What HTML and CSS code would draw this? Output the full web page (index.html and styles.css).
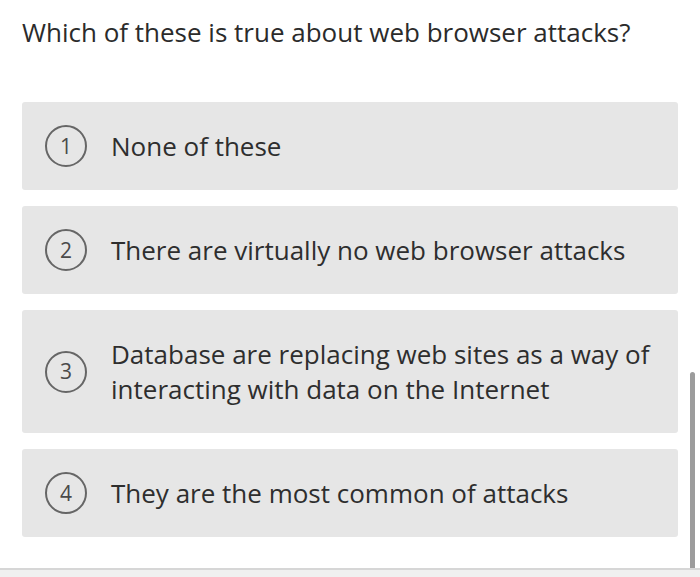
FILE: index.html
```html
<!DOCTYPE html>
<html lang="en">
<head>
<meta charset="utf-8">
<title>Question</title>
<link rel="stylesheet" href="styles.css">
</head>
<body>
<main class="page">
  <h1 class="question">Which of these is true about web browser attacks?</h1>
  <ol class="options">
    <li class="option"><span class="num">1</span><span class="label">None of these</span></li>
    <li class="option"><span class="num">2</span><span class="label">There are virtually no web browser attacks</span></li>
    <li class="option"><span class="num">3</span><span class="label">Database are replacing web sites as a way of interacting with data on the Internet</span></li>
    <li class="option"><span class="num">4</span><span class="label">They are the most common of attacks</span></li>
  </ol>
</main>
<div class="scrollbar"></div>
<div class="bottom-bar"></div>
</body>
</html>
```
FILE: styles.css
```css
html, body {
  margin: 0;
  padding: 0;
  background: #ffffff;
  height: 577px;
  overflow: hidden;
}
body {
  font-family: "Open Sans", "Noto Sans", sans-serif;
  color: #333333;
  position: relative;
}
.page {
  padding: 12px 22px 0 22px;
}
.question {
  margin: 0;
  font-size: 26px;
  font-weight: 400;
  line-height: 40px;
  color: #2b2b2b;
}
.options {
  list-style: none;
  margin: 50px 0 0 0;
  padding: 0;
  display: flex;
  flex-direction: column;
  gap: 16px;
}
.option {
  background: #e6e6e6;
  border-radius: 3px;
  display: flex;
  align-items: center;
  gap: 24px;
  padding: 21.5px 20px 21.5px 23px;
}
.num {
  flex: 0 0 auto;
  width: 38px;
  height: 38px;
  border: 2px solid #666666;
  border-radius: 50%;
  display: flex;
  align-items: center;
  justify-content: center;
  font-size: 21px;
  line-height: 1;
  color: #4a4a4a;
}
.label {
  font-size: 26px;
  line-height: 35px;
  padding: 5px 0;
  color: #2e2e2e;
}
.scrollbar {
  position: absolute;
  left: 690px;
  top: 372px;
  width: 5px;
  height: 201px;
  border-radius: 3px;
  background: #9c9c9c;
}
.bottom-bar {
  position: absolute;
  left: 0;
  right: 0;
  top: 568px;
  height: 9px;
  border-top: 2px solid #d6d6d6;
  background: #f0f0f0;
  box-sizing: border-box;
}
```
